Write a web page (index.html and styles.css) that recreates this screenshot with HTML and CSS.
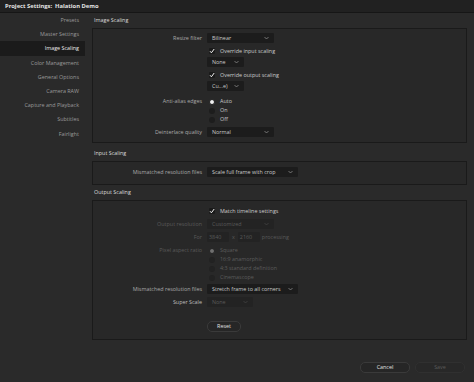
FILE: index.html
```html
<!DOCTYPE html>
<html>
<head>
<meta charset="utf-8">
<link rel="stylesheet" href="styles.css">
</head>
<body>
<div class="app">
  <div class="titlebar">Project Settings:&nbsp; Halation Demo</div>
  <div class="content">
    <nav class="sidebar">
      <div class="nav-item">Presets</div>
      <div class="nav-item">Master Settings</div>
      <div class="nav-item active">Image Scaling</div>
      <div class="nav-item">Color Management</div>
      <div class="nav-item">General Options</div>
      <div class="nav-item">Camera RAW</div>
      <div class="nav-item">Capture and Playback</div>
      <div class="nav-item">Subtitles</div>
      <div class="nav-item">Fairlight</div>
    </nav>
    <main class="main">
      <div class="section-title">Image Scaling</div>
      <div class="box box-image">
        <div class="row">
          <div class="label">Resize filter</div>
          <div class="dd w67"><span>Bilinear</span><svg class="chev" viewBox="0 0 6 4"><path d="M0.6 0.8 L3 3.2 L5.4 0.8"/></svg></div>
        </div>
        <div class="row mt3">
          <div class="label"></div>
          <div class="check"><span class="cb"><svg viewBox="0 0 6 6"><path d="M1 3.2 L2.4 4.8 L5.2 1"/></svg></span>Override input scaling</div>
        </div>
        <div class="row mt1">
          <div class="label"></div>
          <div class="dd w37"><span>None</span><svg class="chev" viewBox="0 0 6 4"><path d="M0.6 0.8 L3 3.2 L5.4 0.8"/></svg></div>
        </div>
        <div class="row mt3">
          <div class="label"></div>
          <div class="check"><span class="cb"><svg viewBox="0 0 6 6"><path d="M1 3.2 L2.4 4.8 L5.2 1"/></svg></span>Override output scaling</div>
        </div>
        <div class="row mt1">
          <div class="label"></div>
          <div class="dd w37"><span>Cu...e)</span><svg class="chev" viewBox="0 0 6 4"><path d="M0.6 0.8 L3 3.2 L5.4 0.8"/></svg></div>
        </div>
        <div class="row row-radio mt6">
          <div class="label">Anti-alias edges</div>
          <div class="radios">
            <div class="radio"><span class="rb on"></span>Auto</div>
            <div class="radio"><span class="rb"></span>On</div>
            <div class="radio"><span class="rb"></span>Off</div>
          </div>
        </div>
        <div class="row mt3">
          <div class="label">Deinterlace quality</div>
          <div class="dd w67"><span>Normal</span><svg class="chev" viewBox="0 0 6 4"><path d="M0.6 0.8 L3 3.2 L5.4 0.8"/></svg></div>
        </div>
      </div>

      <div class="section-title s2">Input Scaling</div>
      <div class="box box-input">
        <div class="row">
          <div class="label">Mismatched resolution files</div>
          <div class="dd w91"><span>Scale full frame with crop</span><svg class="chev" viewBox="0 0 6 4"><path d="M0.6 0.8 L3 3.2 L5.4 0.8"/></svg></div>
        </div>
      </div>

      <div class="section-title s3">Output Scaling</div>
      <div class="box box-output">
        <div class="row">
          <div class="label"></div>
          <div class="check"><span class="cb"><svg viewBox="0 0 6 6"><path d="M1 3.2 L2.4 4.8 L5.2 1"/></svg></span>Match timeline settings</div>
        </div>
        <div class="row mt3 dim">
          <div class="label">Output resolution</div>
          <div class="dd w67"><span>Customized</span><svg class="chev" viewBox="0 0 6 4"><path d="M0.6 0.8 L3 3.2 L5.4 0.8"/></svg></div>
        </div>
        <div class="row mt3 dim">
          <div class="label">For</div>
          <div class="res">
            <span class="inp">3840</span><span class="x">x</span><span class="inp">2160</span><span class="proc">processing</span>
          </div>
        </div>
        <div class="row row-radio mt4 dim">
          <div class="label">Pixel aspect ratio</div>
          <div class="radios">
            <div class="radio"><span class="rb on"></span>Square</div>
            <div class="radio"><span class="rb"></span>16:9 anamorphic</div>
            <div class="radio"><span class="rb"></span>4:3 standard definition</div>
            <div class="radio"><span class="rb"></span>Cinemascope</div>
          </div>
        </div>
        <div class="row mt2">
          <div class="label">Mismatched resolution files</div>
          <div class="dd w91"><span>Stretch frame to all corners</span><svg class="chev" viewBox="0 0 6 4"><path d="M0.6 0.8 L3 3.2 L5.4 0.8"/></svg></div>
        </div>
        <div class="row mt3">
          <div class="label bright">Super Scale</div>
          <div class="dd w46 dimdd"><span>None</span><svg class="chev" viewBox="0 0 6 4"><path d="M0.6 0.8 L3 3.2 L5.4 0.8"/></svg></div>
        </div>
        <div class="row row-btn mt14">
          <div class="label"></div>
          <button class="btn reset">Reset</button>
        </div>
      </div>
    </main>
  </div>
  <div class="footer">
    <button class="btn foot">Cancel</button>
    <button class="btn foot disabled">Save</button>
  </div>
</div>
</body>
</html>
```

FILE: styles.css
```css
html, body {
  margin: 0;
  padding: 0;
  background: #2a2a2a;
}
body {
  font-family: "Open Sans", "Noto Sans", sans-serif;
  font-size: 5.4px;
  color: #a6a6a6;
}
.app {
  width: 474px;
  height: 382px;
  display: flex;
  flex-direction: column;
  overflow: hidden;
}
.titlebar {
  height: 12px;
  line-height: 12px;
  background: #212121;
  border-bottom: 1px solid #161616;
  color: #e4e4e4;
  font-weight: 700;
  font-size: 5.8px;
  padding-left: 5px;
  white-space: pre;
}
.content {
  display: flex;
  flex: 1;
  min-height: 0;
}
.sidebar {
  width: 85px;
  flex: none;
  display: flex;
  flex-direction: column;
}
.nav-item {
  height: 14.2px;
  line-height: 14.2px;
  text-align: right;
  padding-right: 6px;
  color: #9a9a9a;
}
.nav-item.active {
  background: #1b1b1b;
  color: #eeeeee;
}
.main {
  flex: 1;
  padding: 0 7px 0 7px;
  display: flex;
  flex-direction: column;
}
.section-title {
  height: 15px;
  line-height: 15px;
  padding-left: 2px;
  color: #dcdcdc;
}
.section-title.s2 { margin-top: 3px; }
.box {
  border: 1px solid #1a1a1a;
  background: #282828;
  display: flex;
  flex-direction: column;
}
.box-image { padding: 4px 0 5px 0; }
.box-input { padding: 5px 0 7px 0; }
.box-output { padding: 5px 0 7px 0; }
.row {
  display: grid;
  grid-template-columns: 109px auto;
  column-gap: 5px;
  align-items: center;
  justify-items: start;
  height: 10px;
}
.row-radio { height: auto; align-items: start; }
.row-btn { height: 11px; }
.mt1 { margin-top: 1px; }
.mt2 { margin-top: 2px; }
.mt3 { margin-top: 3px; }
.mt4 { margin-top: 4px; }
.mt6 { margin-top: 6px; }
.mt14 { margin-top: 14px; }
.label {
  justify-self: end;
  text-align: right;
  white-space: nowrap;
  color: #a8a8a8;
  line-height: 10px;
}
.row-radio .label { line-height: 9px; }
.label.bright { color: #bdbdbd; }
.dd {
  height: 10px;
  box-sizing: border-box;
  background: #1c1c1c;
  border-radius: 1px;
  color: #cacaca;
  display: flex;
  align-items: center;
  justify-content: space-between;
  padding: 0 5px 0 5px;
  white-space: nowrap;
}
.dd span { line-height: 10px; }
.chev {
  width: 5px;
  height: 4px;
  fill: none;
  stroke: #a0a0a0;
  stroke-width: 0.8;
}
.w37 { width: 37px; }
.w46 { width: 46px; }
.w67 { width: 67px; }
.w91 { width: 91px; }
.check {
  display: flex;
  align-items: center;
  color: #cccccc;
  line-height: 10px;
  white-space: nowrap;
}
.cb {
  width: 6px;
  height: 6px;
  background: #1a1a1a;
  border-radius: 1px;
  margin: 0 5px 0 2px;
  display: flex;
}
.cb svg {
  width: 6px;
  height: 6px;
  fill: none;
  stroke: #f2f2f2;
  stroke-width: 1;
}
.radios {
  display: flex;
  flex-direction: column;
}
.radio {
  height: 9px;
  line-height: 9px;
  display: flex;
  align-items: center;
  color: #c8c8c8;
  white-space: nowrap;
}
.rb {
  width: 6px;
  height: 6px;
  border-radius: 50%;
  background: #1d1d1d;
  margin: 0 5px 0 2px;
  box-sizing: border-box;
}
.rb.on {
  background: #f0f0f0;
  border: 1px solid #1d1d1d;
}
.dim .label { color: #5a5a5a; }
.dim .dd { background: #232323; color: #5a5a5a; }
.dim .chev { stroke: #4a4a4a; }
.dim .radio { color: #5c5c5c; }
.dim .rb { background: #222222; }
.dim .rb.on { background: #707070; border-color: #232323; }
.dimdd { background: #232323; color: #5a5a5a; }
.dimdd .chev { stroke: #4a4a4a; }
.res {
  display: flex;
  align-items: center;
  color: #5a5a5a;
  white-space: nowrap;
}
.inp {
  width: 22px;
  height: 10px;
  line-height: 10px;
  box-sizing: border-box;
  padding-left: 2px;
  background: #232323;
  border-radius: 1px;
}
.x { margin: 0 3px 0 3px; }
.proc { margin-left: 2px; }
.btn {
  font-family: inherit;
  font-size: 5.4px;
  padding: 0;
  margin: 0;
  height: 11px;
  line-height: 9px;
  border: 1px solid #3a3a3a;
  border-radius: 5px;
  background: #262626;
  color: #e2e2e2;
}
.reset { width: 34px; }
.footer {
  height: 33px;
  display: flex;
  justify-content: flex-end;
  align-items: flex-start;
  padding: 13px 9px 0 0;
  box-sizing: border-box;
  column-gap: 5px;
}
.foot { width: 50px; }
.foot.disabled {
  color: #5a5a5a;
  border-color: #303030;
  background: #282828;
}
```
